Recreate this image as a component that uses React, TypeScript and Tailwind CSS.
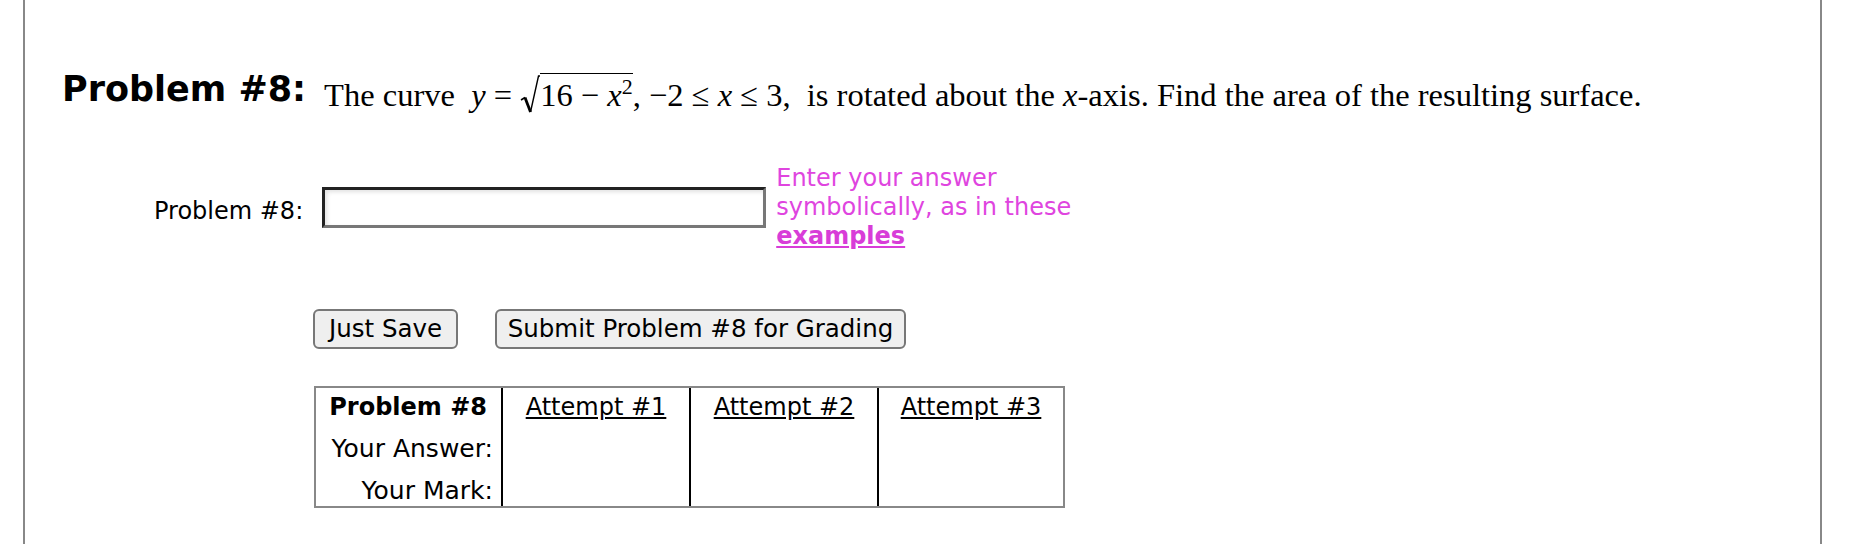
import React from "react";

const sans = { fontFamily: '"DejaVu Sans", Verdana, sans-serif' };

function Radical() {
  return (
    <svg
      width="20"
      height="40"
      viewBox="0 0 20 40"
      className="inline-block align-[-9px]"
      aria-hidden="true"
    >
      <path d="M1 25 L5 22.5" stroke="#000" strokeWidth="1.5" fill="none" />
      <path d="M5 22.5 L10.5 37" stroke="#000" strokeWidth="2.8" fill="none" />
      <path d="M10.5 37 L18.5 1 L20 1" stroke="#000" strokeWidth="1.4" fill="none" />
    </svg>
  );
}

export default function App() {
  return (
    <div className="min-h-[544px] w-full bg-white">
      <div className="ml-[23px] w-[1799px] min-h-[544px] border-x-2 border-[#888]">
        {/* Title row */}
        <div className="flex items-start pl-[37px] pt-[68px]">
          <div
            className="text-[35px] leading-[42px] font-bold text-black whitespace-nowrap"
            style={sans}
          >
            Problem #8:
          </div>
          <div
            className="ml-[18px] mt-[6px] text-[32.5px] leading-[42px] text-black whitespace-nowrap"
            style={{ fontFamily: '"Liberation Serif", "Times New Roman", serif' }}
          >
            The curve&nbsp; <i className="italic">y</i> ={" "}
            <Radical />
            <span className="border-t-[1.5px] border-black pt-[3px]">
              16 − <i className="italic">x</i>
              <span className="relative -top-[12px] text-[22px]">2</span>
            </span>
            , −2 ≤ <i className="italic">x</i> ≤ 3,&nbsp; is rotated about the{" "}
            <i className="italic">x</i>-axis. Find the area of the resulting surface.
          </div>
        </div>

        {/* Answer row */}
        <div className="mt-[44px] flex items-center" style={sans}>
          <div className="ml-[129px] self-start mt-[33px] text-[24px] leading-[29px] text-black whitespace-nowrap">
            Problem #8:
          </div>
          <div className="ml-[19px] h-[41px] w-[444px] border-[3px] border-t-[#222] border-l-[#222] border-b-[#777] border-r-[#777] bg-white shadow-[inset_2px_2px_4px_rgba(0,0,0,0.12)]" />
          <div className="ml-[10px] text-[24px] leading-[29px] text-[#df45df]">
            <div>Enter your answer</div>
            <div>symbolically, as in these</div>
            <div>
              <span className="font-bold underline text-[#d83dd8]">examples</span>
            </div>
          </div>
        </div>

        {/* Buttons */}
        <div className="mt-[58px] ml-[288px] flex gap-[37px]" style={sans}>
          <button className="h-[40px] w-[145px] rounded-[6px] border-2 border-[#777] bg-[#efefef] text-[24.5px] leading-[28px] text-black">
            Just Save
          </button>
          <button className="h-[40px] w-[411px] rounded-[6px] border-2 border-[#777] bg-[#efefef] text-[24.5px] leading-[28px] text-black">
            Submit Problem #8 for Grading
          </button>
        </div>

        {/* Attempts table */}
        <div
          className="mt-[37px] ml-[289px] w-[751px] h-[122px] border-2 border-[#888] flex text-[24px] leading-[30px] text-black"
          style={sans}
        >
          <div className="w-[185px] flex flex-col items-end pt-[4px] gap-[12px] pr-[8px] text-[25px]">
            <div className="font-bold text-[24px] pr-[6px]">Problem #8</div>
            <div>Your Answer:</div>
            <div>Your Mark:</div>
          </div>
          <div className="w-[188px] border-l-2 border-black flex justify-center pt-[4px]">
            <div className="underline">Attempt #1</div>
          </div>
          <div className="w-[188px] border-l-2 border-black flex justify-center pt-[4px]">
            <div className="underline">Attempt #2</div>
          </div>
          <div className="flex-1 border-l-2 border-black flex justify-center pt-[4px]">
            <div className="underline">Attempt #3</div>
          </div>
        </div>
      </div>
    </div>
  );
}
